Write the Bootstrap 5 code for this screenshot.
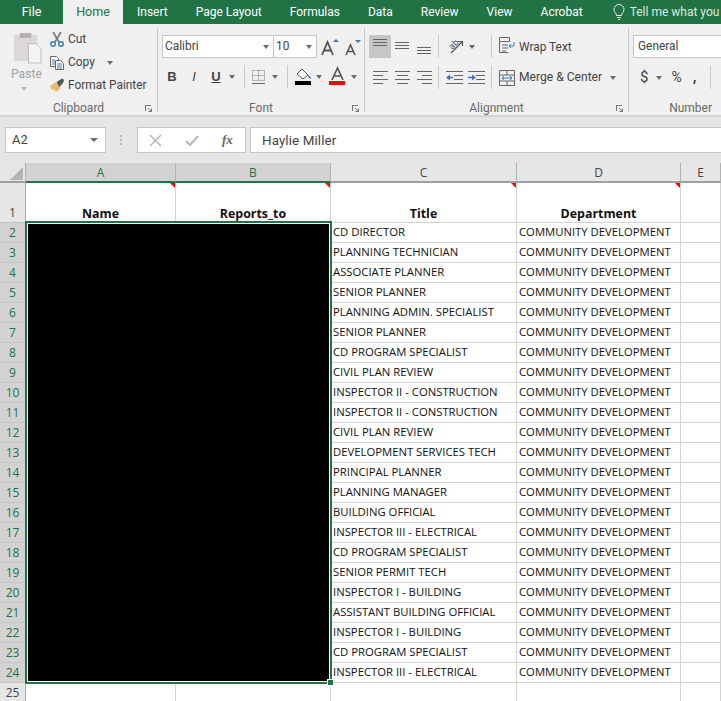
<!DOCTYPE html>
<html lang="en"><head><meta charset="utf-8"><title>Excel</title>
<link href="https://cdn.jsdelivr.net/npm/bootstrap@5.3.0/dist/css/bootstrap.min.css" rel="stylesheet">
<style>
html,body{height:701px;overflow:hidden;background:#fff}
body{font-family:Roboto,"Open Sans",sans-serif;font-size:11.9px;color:#444;position:relative}
svg{display:block;flex:none;overflow:visible}
.tabbar{height:24px;background:#217346;color:#fff;font-size:12px;white-space:nowrap;overflow:hidden}
.tabitem{line-height:24px;padding:0 14px;flex:none}
.tabfile{padding:0;width:63px;text-align:center;font-size:12.5px}
.tabhome{background:#f0f0f0;color:#217346;padding:0;width:60px;text-align:center;font-size:12.5px}
.tabtell{color:#dbe8e0;padding:0 0 0 16px;display:flex;align-items:center;gap:5px}
.ribbon{height:93px;background:#f0f0f0;border-bottom:2px solid #d5d5d5;padding-top:4px;overflow:hidden}
.rgrp{height:84px;flex:none;border-right:1px solid #c9c9c9;position:relative;display:flex;flex-direction:column}
.rbody{height:72px;flex:none}
.rlabel{height:12px;line-height:16px;text-align:center;color:#6a6a6a;font-size:12px}
.launch{position:absolute;right:5px;bottom:0}
.caretd{width:0;height:0;border:3.5px solid transparent;border-top:4px solid #6b6b6b;border-bottom:0;flex:none}
.clipcol{width:30px;margin:4px 9px 0 11px}
.pasteico{margin-left:2px}
.pastetxt{color:#a3a3a3;line-height:14px;margin-top:3px;font-size:12.2px}
.caretpale{border-top-color:#b5b5b5;margin:6px 0 0 10px}
.cliprow{height:23px;gap:4px;white-space:nowrap;color:#444}
.frow{height:23px}
.fontbox{height:23px;background:#fff;border:1px solid #c6c6c6;display:flex;align-items:center;justify-content:space-between;padding:1px 4px 0 2px;color:#444}
.vsep{width:1px;height:23px;background:#c9c9c9;flex:none}
.boldb{font-weight:700;font-size:13px;color:#444;font-family:"Liberation Sans",sans-serif;width:22px;text-align:center}
.alignon{background:#c6c6c6}
.alcell{width:22px;height:23px;display:flex;justify-content:center;flex:none}
.formulabar{height:46px;background:#e6e6e6;padding-top:10px;gap:4px}
.namebox{width:101px;height:26px;margin-left:5px;background:#fff;border:1px solid #c6c6c6;padding:0 7px 0 6px;font-size:13px;color:#444}
.dots{width:23px}
.fxbox{width:109px;height:26px;background:#fff;border:1px solid #c6c6c6}
.formulainput{flex:1;height:26px;background:#fff;border:1px solid #c6c6c6;border-right:0;padding-left:11px;font-size:13.4px;color:#444;line-height:26px;letter-spacing:.1px}
.numsym{font-size:15px}
.pctsym{font-size:14px}
.sheet{position:relative}
.gridt{width:721px;table-layout:fixed;border-collapse:separate;border-spacing:0;font-family:"Open Sans","Noto Sans",sans-serif;font-size:11.3px;color:#111}
.gridt td,.gridt th{height:20px;padding:0;border-right:1px solid #d4d4d4;border-bottom:1px solid #d4d4d4;overflow:hidden;white-space:nowrap;line-height:16px;font-weight:400}
.gridt td{padding:0 0 2px 2px}
.chead th{height:20px;background:#e6e6e6;text-align:center;font-size:12px;color:#444;border-right:1px solid #b2b2b2;border-bottom:2px solid #a0a0a0;line-height:17px}
.chead th.colsel{background:#d2d2d2;color:#217346;border-bottom:2px solid #217346;border-right-color:#b2b2b2}
.corner{position:relative}
.corner svg{position:absolute;left:10px;top:4px}
.gridt th.rh{background:#e6e6e6;font-size:12px;color:#444;text-align:center;border-right:1px solid #a8a8a8;border-bottom:1px solid #c6c6c6;line-height:19px}
.gridt th.rhsel{background:#d2d2d2;color:#217346}
.gridt .r1 th.rh,.gridt .r1 td{height:40px;vertical-align:bottom}
.gridt .r1 td.hd{position:relative;text-align:center;font-weight:700;font-size:12.4px;padding:0 0 1px;line-height:15px;color:#111}
.gridt .r1 td.hd::after{content:"";position:absolute;top:0;right:0;border-top:5px solid #f00;border-left:5px solid transparent}
.selbox{position:absolute;left:25px;top:58px;width:307px;height:463px;border:2px solid #217346;background:#000;box-shadow:inset 0 0 0 1px #fff}
.selhandle{position:absolute;left:327px;top:516px;width:7px;height:7px;background:#217346;border:1px solid #fff}
</style></head><body>
<nav class="tabbar d-flex">
<span class="tabitem tabfile">File</span><span class="tabitem tabhome">Home</span><span class="tabitem">Insert</span><span class="tabitem">Page Layout</span><span class="tabitem">Formulas</span><span class="tabitem">Data</span><span class="tabitem">Review</span><span class="tabitem">View</span><span class="tabitem">Acrobat</span>
<span class="tabitem tabtell"><svg width="12" height="16" viewBox="0 0 12 16" fill="none" stroke="#e6efe9"><path d="M3.500 11.500C3.500 9 1 8.500 1 5.500a5 5 0 0 1 10 0c0 3-2.500 3.500-2.500 6z"/><path d="M4 13.500h4M5 15.500h2"/></svg>Tell me what you</span>
</nav>
<section class="ribbon d-flex">
<div class="rgrp" style="width:158px">
 <div class="rbody d-flex">
  <div class="clipcol">
   <svg class="pasteico" width="29" height="32" viewBox="0 0 30 33"><path d="M1 3h8V1h8v2h8v27H1z" fill="#dcd8d8"/><rect x="7" y="1" width="12" height="5" fill="#b5b1b1"/><path d="M16 12h8l5 5v15H16z" fill="#f5f2f5" stroke="#bdbdbd"/></svg>
   <div class="pastetxt">Paste</div><div class="caretd caretpale"></div>
  </div>
  <div>
   <div class="cliprow d-flex align-items-center"><svg width="14" height="15" viewBox="0 0 14 15" fill="none"><path d="M3 0l6 10M11 0L5 10" stroke="#777" stroke-width="1.600"/><circle cx="3" cy="12" r="2.300" stroke="#3d78b6" stroke-width="1.400"/><circle cx="11" cy="12" r="2.300" stroke="#3d78b6" stroke-width="1.400"/></svg><span>Cut</span></div>
   <div class="cliprow d-flex align-items-center"><svg width="14" height="14" viewBox="0 0 14 14" fill="#fff"><path d="M.5.500h6l2 2v8H.5z" stroke="#666"/><path d="M5.500 4.500h5l3 3v6h-8z" stroke="#666"/><path d="M2 4h3M2 6h3M2 8h3M7 8h5M7 10h5M7 12h5" stroke="#3d78b6"/></svg><span>Copy</span><span class="caretd ms-2"></span></div>
   <div class="cliprow d-flex align-items-center"><svg width="14" height="15" viewBox="0 0 15 15"><path d="M0 8l6-4 5 6-3 4-3-1-1-2-2 1z" fill="#e8b96b"/><path d="M7 4l4-3 3-1 1 3-2 3-3 3z" fill="#555"/></svg><span>Format Painter</span></div>
  </div>
 </div>
 <div class="rlabel">Clipboard</div>
 <svg class="launch" width="7" height="7" viewBox="0 0 7 7" fill="none" stroke="#777"><path d="M.5 6V.5H6"/><path d="M3 3l3.500 3.500M6.500 3.500v3h-3"/></svg>
</div>
<div class="rgrp" style="width:207px">
 <div class="rbody">
  <div class="d-flex align-items-center" style="margin:7px 0 0 4px">
   <div class="fontbox" style="width:112px"><span>Calibri</span><span class="caretd"></span></div>
   <div class="fontbox" style="width:43px;border-left:0"><span>10</span><span class="caretd"></span></div>
   <svg class="ms-1" width="19" height="18" viewBox="0 0 19 18"><path d="M1 17L6.500 4 12 17M3 12.500h7" fill="none" stroke="#555" stroke-width="1.800"/><path d="M12 4l3-3 3 3z" fill="#3d78b6"/></svg>
   <svg style="margin-left:4px" width="18" height="18" viewBox="0 0 18 18"><path d="M2 17L6.500 7 11 17M3.500 13.500h6" fill="none" stroke="#555" stroke-width="1.600"/><path d="M11 2h6l-3 3z" fill="#3d78b6"/></svg>
  </div>
  <div class="frow d-flex align-items-center" style="margin:7px 0 0 3px">
   <span class="boldb">B</span><span class="boldb fst-italic fw-normal">I</span><span class="boldb text-decoration-underline">U</span><span class="caretd" style="margin-left:2px;margin-right:9px"></span><span class="vsep"></span>
   <svg style="margin:0 7px 0 7px" width="13" height="14" viewBox="0 0 13 14" fill="none" stroke="#777" stroke-dasharray="1 1"><path d="M.5.500h12v10H.5zM6.500 .5v10M.5 5.500h12"/><path d="M0 13.500h13" stroke="#666" stroke-dasharray="none"/></svg>
   <span class="caretd" style="margin-right:9px"></span><span class="vsep"></span>
   <span style="margin-left:7px;width:17px"><svg width="17" height="17" viewBox="0 0 17 17"><path d="M2 6l5-5 6 6-5 4z" fill="#fff" stroke="#555"/><path d="M13 7c2 1 3 2 3 4-2-1-3-2-3-4z" fill="#3d78b6"/><rect y="13" width="16" height="4" fill="#000"/></svg></span><span class="caretd" style="margin:0 7px 0 4px"></span>
   <span style="width:17px"><svg width="17" height="17" viewBox="0 0 17 17"><path d="M3 12L8.500 0 14 12M5 8h7" fill="none" stroke="#555" stroke-width="1.700"/><rect y="13" width="16" height="4" fill="#f00"/></svg></span><span class="caretd" style="margin-left:5px"></span>
  </div>
 </div>
 <div class="rlabel">Font</div>
 <svg class="launch" width="7" height="7" viewBox="0 0 7 7" fill="none" stroke="#777"><path d="M.5 6V.5H6"/><path d="M3 3l3.500 3.500M6.500 3.500v3h-3"/></svg>
</div>
<div class="rgrp" style="width:264px">
 <div class="rbody">
  <div class="d-flex align-items-start" style="margin:7px 0 0 4px">
   <div class="alcell alignon"><svg class="mt-1" width="14" height="8" stroke="#666"><path d="M0 .5h14M0 3.500h14M0 6.500h14"/></svg></div>
   <div class="alcell"><svg style="margin-top:7px" width="14" height="8" stroke="#666"><path d="M0 .5h14M0 3.500h14M0 6.500h14"/></svg></div>
   <div class="alcell"><svg style="margin-top:12px" width="14" height="8" stroke="#666"><path d="M0 .5h14M0 3.500h14M0 6.500h14"/></svg></div>
   <span class="vsep" style="margin-left:3px"></span>
   <svg style="margin:3px 3px 0 8px" width="17" height="16" viewBox="0 0 17 16" fill="none" stroke="#666"><text transform="rotate(-45 6 7)" x="2" y="10" font-size="9" fill="#555" stroke="none" font-family="Roboto,sans-serif">ab</text><path d="M4 15L15 4M11 3.500h4.500V8" stroke="#555" stroke-width="1.200"/></svg>
   <span class="caretd" style="margin:10px 16px 0 2px"></span><span class="vsep"></span>
   <svg style="margin:2px 4px 0 7px" width="16" height="16" viewBox="0 0 16 16" fill="none" stroke="#666"><path d="M.5.500h10v4H.5zM.5 4.500v11h9M3 8h6M3 11h6M3 14h4"/><path d="M15 5v4h-5M12 7l-2 2 2 2" stroke="#3d78b6"/></svg>
   <span style="margin-top:2px;line-height:20px;white-space:nowrap">Wrap Text</span>
  </div>
  <div class="frow d-flex align-items-center" style="margin:8px 0 0 4px">
   <div class="alcell align-items-center"><svg width="15" height="13" stroke="#666"><path d="M0 .5h15M0 4.500h10M0 8.500h15M0 12.500h10"/></svg></div>
   <div class="alcell align-items-center"><svg width="15" height="13" stroke="#666"><path d="M0 .5h15M2 4.500h11M0 8.500h15M2 12.500h11"/></svg></div>
   <div class="alcell align-items-center"><svg width="15" height="13" stroke="#666"><path d="M0 .5h15M5 4.500h10M0 8.500h15M5 12.500h10"/></svg></div>
   <span class="vsep" style="margin-left:3px"></span>
   <svg style="margin-left:7px" width="17" height="13" viewBox="0 0 17 13" fill="none" stroke="#666"><path d="M0 .5h17M8 4.500h9M8 8.500h9M0 12.500h17"/><path d="M1 6.500h6" stroke="#3d78b6" stroke-width="1.500"/><path d="M4 3.500L0 6.500l4 3z" fill="#3d78b6" stroke="none"/></svg>
   <svg style="margin:0 6px 0 5px" width="17" height="13" viewBox="0 0 17 13" fill="none" stroke="#666"><path d="M0 .5h17M8 4.500h9M8 8.500h9M0 12.500h17"/><path d="M0 6.500h5" stroke="#3d78b6" stroke-width="1.500"/><path d="M4 3.500l4 3-4 3z" fill="#3d78b6" stroke="none"/></svg>
   <span class="vsep"></span>
   <svg style="margin:0 4px 0 7px" width="16" height="16" viewBox="0 0 16 16" fill="none" stroke="#666"><path d="M.5.500h15v15H.5zM.5 5h15M.5 11h15M8 .5V5M8 11v4.500"/><path d="M3 8h10" stroke="#3d78b6"/><path d="M3 8l2-2M3 8l2 2M13 8l-2-2M13 8l-2 2" stroke="#3d78b6"/></svg>
   <span class="text-nowrap" style="font-size:12.1px">Merge &amp; Center</span><span class="caretd" style="margin-left:8px"></span>
  </div>
 </div>
 <div class="rlabel">Alignment</div>
 <svg class="launch" width="7" height="7" viewBox="0 0 7 7" fill="none" stroke="#777"><path d="M.5 6V.5H6"/><path d="M3 3l3.500 3.500M6.500 3.500v3h-3"/></svg>
</div>
<div class="rgrp flex-grow-1" style="border-right:0">
 <div class="rbody">
  <div class="fontbox ps-1" style="margin:7px 0 0 4px;border-right:0"><span>General</span></div>
  <div class="frow d-flex align-items-center" style="margin:8px 0 0 11px">
   <span class="numsym">$</span><span class="caretd" style="margin:0 9px 0 8px"></span><span class="pctsym">%</span><span class="fw-bold numsym" style="margin-left:11px">,</span><span class="vsep" style="margin-left:14px"></span>
  </div>
 </div>
 <div class="rlabel" style="text-align:right;padding-right:9px">Number</div>
</div>
</section>
<section class="formulabar d-flex">
 <div class="namebox d-flex align-items-center justify-content-between"><span>A2</span><span class="caretd" style="border-width:4px 4px 0"></span></div>
 <div class="dots d-flex justify-content-center pt-2"><svg width="3" height="10" fill="#b5b5b5"><rect width="2" height="2"/><rect y="4" width="2" height="2"/><rect y="8" width="2" height="2"/></svg></div>
 <div class="fxbox d-flex align-items-center">
  <svg style="margin-left:12px" width="11" height="11" stroke="#b8b8b8" stroke-width="1.500" fill="none"><path d="M0 0l11 11M11 0L0 11"/></svg>
  <svg style="margin-left:24px" width="14" height="11" stroke="#b8b8b8" stroke-width="2" fill="none"><path d="M1 6l4 4 8-9"/></svg>
  <span class="fst-italic fw-bold" style="margin-left:23px;font-family:'Liberation Serif',serif;font-size:13px;color:#666">fx</span>
 </div>
 <div class="formulainput">Haylie Miller</div>
</section>
<main class="sheet">
<table class="gridt">
<colgroup><col style="width:26px"><col style="width:150px"><col style="width:155px"><col style="width:186px"><col style="width:164px"><col style="width:40px"></colgroup>
<thead><tr class="chead"><th class="corner"><svg width="13" height="13"><path d="M13 0v13H0z" fill="#b4b4b4"/></svg></th><th class="colsel">A</th><th class="colsel">B</th><th>C</th><th>D</th><th>E</th></tr></thead>
<tbody>
<tr class="r1"><th class="rh">1</th><td class="hd">Name</td><td class="hd">Reports_to</td><td class="hd">Title</td><td class="hd">Department</td><td></td></tr>
<tr><th class="rh rhsel">2</th><td></td><td></td><td>CD DIRECTOR</td><td>COMMUNITY DEVELOPMENT</td><td></td></tr>
<tr><th class="rh rhsel">3</th><td></td><td></td><td>PLANNING TECHNICIAN</td><td>COMMUNITY DEVELOPMENT</td><td></td></tr>
<tr><th class="rh rhsel">4</th><td></td><td></td><td>ASSOCIATE PLANNER</td><td>COMMUNITY DEVELOPMENT</td><td></td></tr>
<tr><th class="rh rhsel">5</th><td></td><td></td><td>SENIOR PLANNER</td><td>COMMUNITY DEVELOPMENT</td><td></td></tr>
<tr><th class="rh rhsel">6</th><td></td><td></td><td>PLANNING ADMIN. SPECIALIST</td><td>COMMUNITY DEVELOPMENT</td><td></td></tr>
<tr><th class="rh rhsel">7</th><td></td><td></td><td>SENIOR PLANNER</td><td>COMMUNITY DEVELOPMENT</td><td></td></tr>
<tr><th class="rh rhsel">8</th><td></td><td></td><td>CD PROGRAM SPECIALIST</td><td>COMMUNITY DEVELOPMENT</td><td></td></tr>
<tr><th class="rh rhsel">9</th><td></td><td></td><td>CIVIL PLAN REVIEW</td><td>COMMUNITY DEVELOPMENT</td><td></td></tr>
<tr><th class="rh rhsel">10</th><td></td><td></td><td>INSPECTOR II - CONSTRUCTION</td><td>COMMUNITY DEVELOPMENT</td><td></td></tr>
<tr><th class="rh rhsel">11</th><td></td><td></td><td>INSPECTOR II - CONSTRUCTION</td><td>COMMUNITY DEVELOPMENT</td><td></td></tr>
<tr><th class="rh rhsel">12</th><td></td><td></td><td>CIVIL PLAN REVIEW</td><td>COMMUNITY DEVELOPMENT</td><td></td></tr>
<tr><th class="rh rhsel">13</th><td></td><td></td><td>DEVELOPMENT SERVICES TECH</td><td>COMMUNITY DEVELOPMENT</td><td></td></tr>
<tr><th class="rh rhsel">14</th><td></td><td></td><td>PRINCIPAL PLANNER</td><td>COMMUNITY DEVELOPMENT</td><td></td></tr>
<tr><th class="rh rhsel">15</th><td></td><td></td><td>PLANNING MANAGER</td><td>COMMUNITY DEVELOPMENT</td><td></td></tr>
<tr><th class="rh rhsel">16</th><td></td><td></td><td>BUILDING OFFICIAL</td><td>COMMUNITY DEVELOPMENT</td><td></td></tr>
<tr><th class="rh rhsel">17</th><td></td><td></td><td>INSPECTOR III - ELECTRICAL</td><td>COMMUNITY DEVELOPMENT</td><td></td></tr>
<tr><th class="rh rhsel">18</th><td></td><td></td><td>CD PROGRAM SPECIALIST</td><td>COMMUNITY DEVELOPMENT</td><td></td></tr>
<tr><th class="rh rhsel">19</th><td></td><td></td><td>SENIOR PERMIT TECH</td><td>COMMUNITY DEVELOPMENT</td><td></td></tr>
<tr><th class="rh rhsel">20</th><td></td><td></td><td>INSPECTOR I - BUILDING</td><td>COMMUNITY DEVELOPMENT</td><td></td></tr>
<tr><th class="rh rhsel">21</th><td></td><td></td><td>ASSISTANT BUILDING OFFICIAL</td><td>COMMUNITY DEVELOPMENT</td><td></td></tr>
<tr><th class="rh rhsel">22</th><td></td><td></td><td>INSPECTOR I - BUILDING</td><td>COMMUNITY DEVELOPMENT</td><td></td></tr>
<tr><th class="rh rhsel">23</th><td></td><td></td><td>CD PROGRAM SPECIALIST</td><td>COMMUNITY DEVELOPMENT</td><td></td></tr>
<tr><th class="rh rhsel">24</th><td></td><td></td><td>INSPECTOR III - ELECTRICAL</td><td>COMMUNITY DEVELOPMENT</td><td></td></tr>
<tr><th class="rh">25</th><td></td><td></td><td></td><td></td><td></td></tr>
</tbody></table>
<div class="selbox"></div><div class="selhandle"></div>
</main>
</body></html>
